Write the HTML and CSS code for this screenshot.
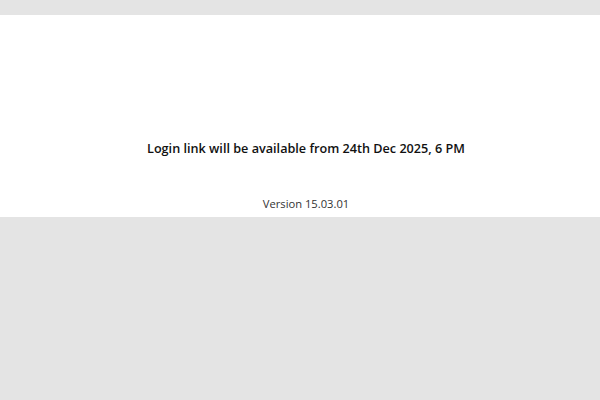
FILE: index.html
```html
<!DOCTYPE html>
<html>
<head>
<meta charset="utf-8">
<link rel="stylesheet" href="styles.css">
</head>
<body>
<div class="topbar"></div>
<main class="panel">
  <p class="notice">Login link will be available from 24th Dec 2025, 6 PM</p>
  <p class="version">Version 15.03.01</p>
</main>
</body>
</html>
```
FILE: styles.css
```css
html, body {
  margin: 0;
  padding: 0;
  background: #e4e4e4;
  font-family: "Open Sans", "Liberation Sans", sans-serif;
}
.topbar {
  height: 15px;
  background: #e4e4e4;
}
.panel {
  background: #ffffff;
  height: 202px;
  display: flex;
  flex-direction: column;
  align-items: center;
  box-sizing: border-box;
  padding-top: 122px;
  padding-left: 12px;
}
.notice {
  margin: 0;
  font-size: 12.65px;
  font-weight: 600;
  color: #111111;
  line-height: 22px;
}
.version {
  margin: 36px 0 0;
  font-size: 11.2px;
  color: #333333;
  line-height: 18px;
}
```
